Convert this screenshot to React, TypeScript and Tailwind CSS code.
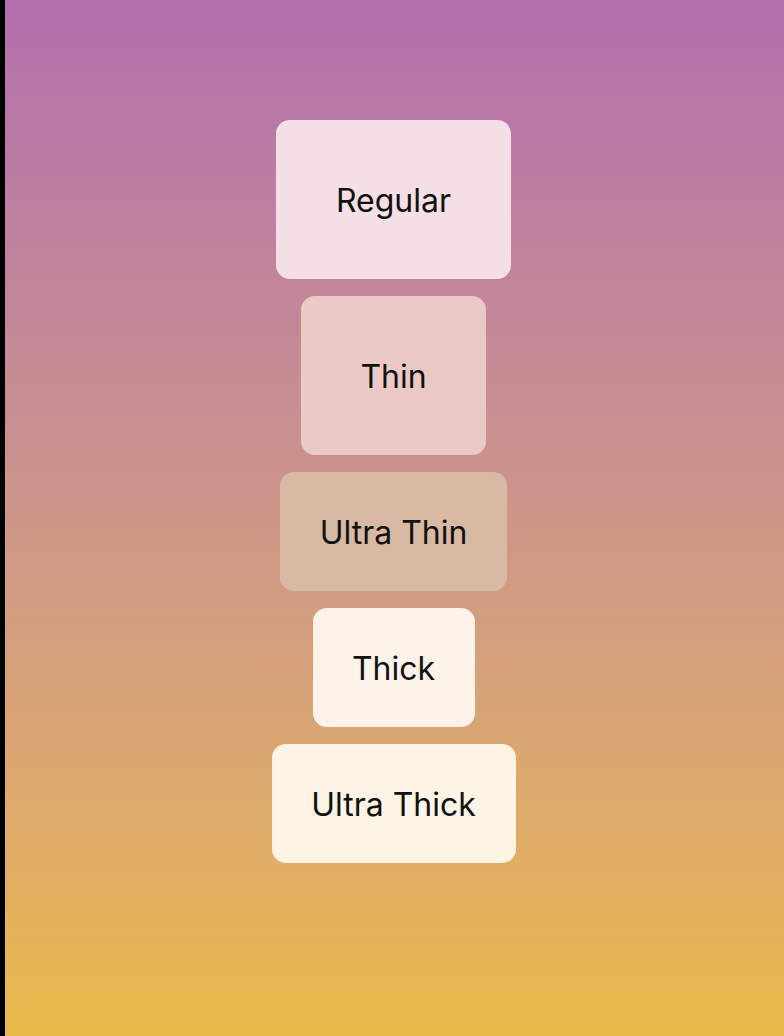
const cards = [
  { label: 'Regular', w: 'w-[235px]', h: 'h-[159px]', bg: 'bg-[#f5dfe6]' },
  { label: 'Thin', w: 'w-[185px]', h: 'h-[159px]', bg: 'bg-[#ebcac5]' },
  { label: 'Ultra Thin', w: 'w-[227px]', h: 'h-[119px]', bg: 'bg-[#d8b9a3]' },
  { label: 'Thick', w: 'w-[162px]', h: 'h-[119px]', bg: 'bg-[#fdf3e8]' },
  { label: 'Ultra Thick', w: 'w-[244px]', h: 'h-[119px]', bg: 'bg-[#fdf4e6]' },
];

export default function App() {
  return (
    <div className="flex h-[1036px] w-[784px] bg-black">
      {/* left edge strip */}
      <div className="w-[5px] shrink-0" />

      <main className="flex flex-1 flex-col items-center gap-[17px] bg-gradient-to-b from-[#b36fad] to-[#eaba48] pt-[120px] pr-[2px] font-['Inter',sans-serif] text-[32px] text-[#111111]">
        {cards.map((card) => (
          <div
            key={card.label}
            className={`flex items-center justify-center rounded-[14px] pt-[2px] ${card.w} ${card.h} ${card.bg}`}
          >
            {card.label}
          </div>
        ))}
      </main>
    </div>
  );
}
